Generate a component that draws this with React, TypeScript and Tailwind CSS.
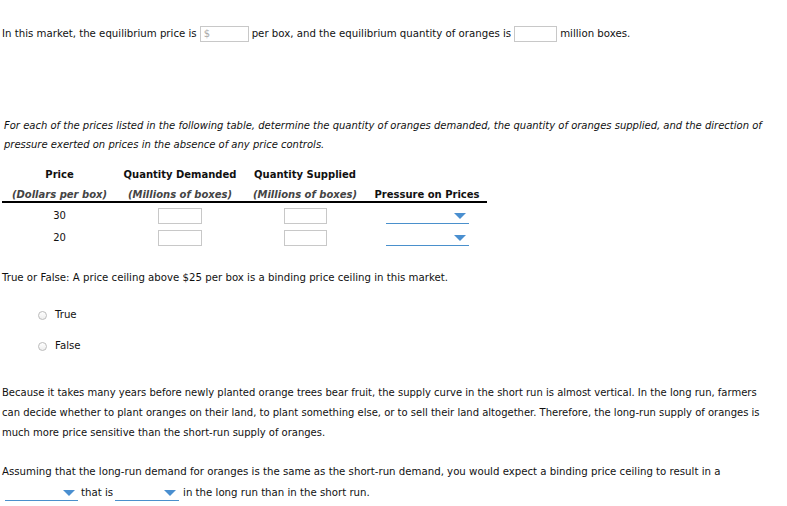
import React from "react";

const font = { fontFamily: '"DejaVu Sans", Verdana, sans-serif' };

function Dropdown({ w }: { w: string }) {
  return (
    <span className={`relative inline-block ${w} h-[15px] border-b border-[#4a90cc] align-middle`}>
      <svg className="absolute right-[3px] top-[4px]" width="12" height="6" viewBox="0 0 12 6">
        <polygon points="0,0 12,0 6,6" fill="#4a8fd0" />
      </svg>
    </span>
  );
}

function Box({ w, children }: { w: string; children?: React.ReactNode }) {
  return (
    <span className={`inline-block ${w} h-[16px] border border-[#c8c8c8] bg-white align-middle text-[#aaa] text-[10px] leading-[14px] pl-[3px]`}>
      {children}
    </span>
  );
}

function Radio({ label }: { label: string }) {
  return (
    <div className="flex items-center gap-[8px] pl-[38px]">
      <span className="inline-block w-[9px] h-[9px] rounded-full border border-[#bbb] bg-gradient-to-b from-white to-[#eee]" />
      <span>{label}</span>
    </div>
  );
}

export default function App() {
  return (
    <div style={font} className="w-[787px] h-[506px] bg-white text-[#111] text-[10.2px] leading-[20px] relative overflow-hidden">
      <div className="pl-[2px] pt-[24px] flex items-center whitespace-nowrap">
        <span>In this market, the equilibrium price is</span>
        <span className="ml-[3px] mr-[3px]"><Box w="w-[49px]">$</Box></span>
        <span>per box, and the equilibrium quantity of oranges is</span>
        <span className="ml-[3px] mr-[3px]"><Box w="w-[43px]" /></span>
        <span>million boxes.</span>
      </div>

      <p className="pl-[4px] mt-[72px] italic pr-[10px] text-[10px] leading-[19px]">
        For each of the prices listed in the following table, determine the quantity of oranges demanded, the quantity of oranges supplied, and the direction of pressure exerted on prices in the absence of any price controls.
      </p>

      <table className="ml-[2px] mt-[12px] border-collapse text-[10px]">
        <thead>
          <tr className="font-bold h-[17px]">
            <th className="p-0 w-[115px] text-center leading-[17px]">Price</th>
            <th className="p-0 w-[126px] text-center leading-[17px]">Quantity Demanded</th>
            <th className="p-0 w-[124px] text-center leading-[17px]">Quantity Supplied</th>
            <th className="p-0 w-[120px]"></th>
          </tr>
          <tr className="border-b-2 border-black h-[19px]">
            <th className="p-0 align-bottom italic font-bold text-[#444] leading-[13px]">(Dollars per box)</th>
            <th className="p-0 align-bottom italic font-bold text-[#444] leading-[13px]">(Millions of boxes)</th>
            <th className="p-0 align-bottom italic font-bold text-[#444] leading-[13px]">(Millions of boxes)</th>
            <th className="p-0 align-bottom font-bold leading-[13px]">Pressure on Prices</th>
          </tr>
        </thead>
        <tbody>
          <tr className="h-[24px]">
            <td className="p-0 pt-[2px] text-center leading-[22px]">30</td>
            <td className="p-0 pt-[2px] text-center"><Box w="w-[44px]" /></td>
            <td className="p-0 pt-[2px] text-center"><Box w="w-[43px]" /></td>
            <td className="p-0 pt-[2px] text-center"><Dropdown w="w-[83px]" /></td>
          </tr>
          <tr className="h-[22px]">
            <td className="p-0 text-center leading-[22px]">20</td>
            <td className="p-0 text-center"><Box w="w-[44px]" /></td>
            <td className="p-0 text-center"><Box w="w-[43px]" /></td>
            <td className="p-0 text-center"><Dropdown w="w-[83px]" /></td>
          </tr>
        </tbody>
      </table>

      <p className="pl-[2px] mt-[19px]">True or False: A price ceiling above $25 per box is a binding price ceiling in this market.</p>

      <div className="mt-[17px] flex flex-col gap-[11px]">
        <Radio label="True" />
        <Radio label="False" />
      </div>

      <p className="pl-[2px] mt-[27px] pr-[12px] text-[10px]">
        Because it takes many years before newly planted orange trees bear fruit, the supply curve in the short run is almost vertical. In the long run, farmers can decide whether to plant oranges on their land, to plant something else, or to sell their land altogether. Therefore, the long-run supply of oranges is much more price sensitive than the short-run supply of oranges.
      </p>

      <p className="pl-[2px] mt-[19px]">
        Assuming that the long-run demand for oranges is the same as the short-run demand, you would expect a binding price ceiling to result in a
      </p>
      <div className="pl-[5px] mt-[1px] flex items-center whitespace-nowrap">
        <Dropdown w="w-[73px]" />
        <span className="ml-[3px] mr-[2px]">that is</span>
        <Dropdown w="w-[64px]" />
        <span className="ml-[4px]">in the long run than in the short run.</span>
      </div>
    </div>
  );
}
